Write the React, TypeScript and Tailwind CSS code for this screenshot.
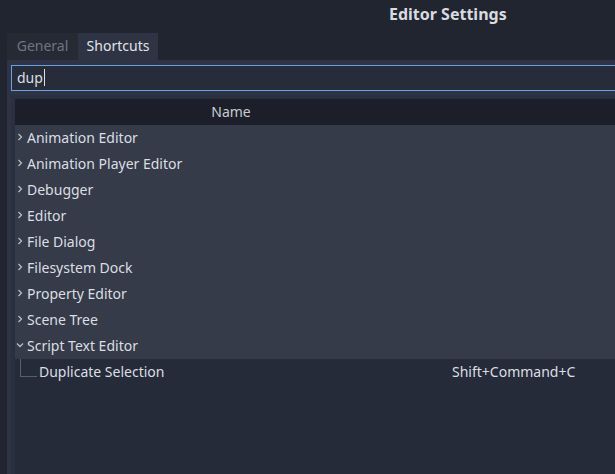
import React from "react";

const categories = [
  "Animation Editor",
  "Animation Player Editor",
  "Debugger",
  "Editor",
  "File Dialog",
  "Filesystem Dock",
  "Property Editor",
  "Scene Tree",
];

function Chevron({ open }: { open?: boolean }) {
  return (
    <svg width="8" height="8" viewBox="0 0 8 8" className="shrink-0">
      {open ? (
        <path d="M1 2.5 L4 5.5 L7 2.5" fill="none" stroke="#b9bcc4" strokeWidth="1.3" />
      ) : (
        <path d="M2.5 1 L5.5 4 L2.5 7" fill="none" stroke="#b9bcc4" strokeWidth="1.3" />
      )}
    </svg>
  );
}

export default function App() {
  return (
    <div
      className="w-[615px] h-[474px] overflow-hidden bg-[#21252f] text-[14px] text-[#dcdee3] flex flex-col"
      style={{ fontFamily: '"Noto Sans", "Open Sans", sans-serif' }}
    >
      {/* title */}
      <div className="h-[33px] flex items-center pl-[389px] pb-[5px] shrink-0">
        <span className="font-bold text-[16px] text-[#d9dbe0] whitespace-nowrap">Editor Settings</span>
      </div>

      {/* tabs */}
      <div className="h-[27px] flex pl-[7px] shrink-0">
        <div className="w-[71px] bg-[#262a35] text-[#6f7481] flex items-center justify-center pb-[2px]">General</div>
        <div className="w-[80px] bg-[#2e3444] text-[#e2e4e8] flex items-center justify-center pb-[2px]">Shortcuts</div>
      </div>

      {/* panel */}
      <div className="flex-1 ml-[7px] bg-[#2e3444] pl-[4px] pt-[5px] flex flex-col min-h-0">
        <div className="h-[26px] border border-r-0 border-[#6b9fe8] bg-[#272c3a] flex items-center pl-[5px] pb-[1px] shrink-0">
          <span>dup</span>
          <span className="w-px h-[17px] bg-[#dcdee3] ml-[1px]" />
        </div>

        <div className="mt-[4px] flex-1 bg-[#2a3040] pl-[4px] pt-[4px] flex flex-col min-h-0">
          <div className="flex-1 bg-[#262b3a] flex flex-col min-h-0">
            <div className="h-[26px] bg-[#1c1f29] flex items-center pb-[2px] shrink-0">
              <div className="w-[432px] text-center text-[#c9ccd3]">Name</div>
            </div>
            {categories.map((c) => (
              <div key={c} className="h-[26px] bg-[#353b49] flex items-center pl-[1px] gap-[3px] pb-[2px] shrink-0">
                <Chevron />
                <span className="whitespace-nowrap">{c}</span>
              </div>
            ))}
            <div className="h-[26px] bg-[#353b49] flex items-center pl-[1px] gap-[3px] pb-[2px] shrink-0">
              <Chevron open />
              <span className="whitespace-nowrap">Script Text Editor</span>
            </div>
            <div className="h-[26px] flex items-center pb-[2px] shrink-0 relative">
              <div className="w-[432px] flex items-center pl-[24px]">
                <span className="whitespace-nowrap">Duplicate Selection</span>
              </div>
              <span className="pl-[5px] whitespace-nowrap">Shift+Command+C</span>
              <div className="absolute left-[5px] top-0 h-[18px] w-[17px] border-l border-b border-[#5a5f6b]" />
            </div>
          </div>
        </div>
      </div>
    </div>
  );
}
